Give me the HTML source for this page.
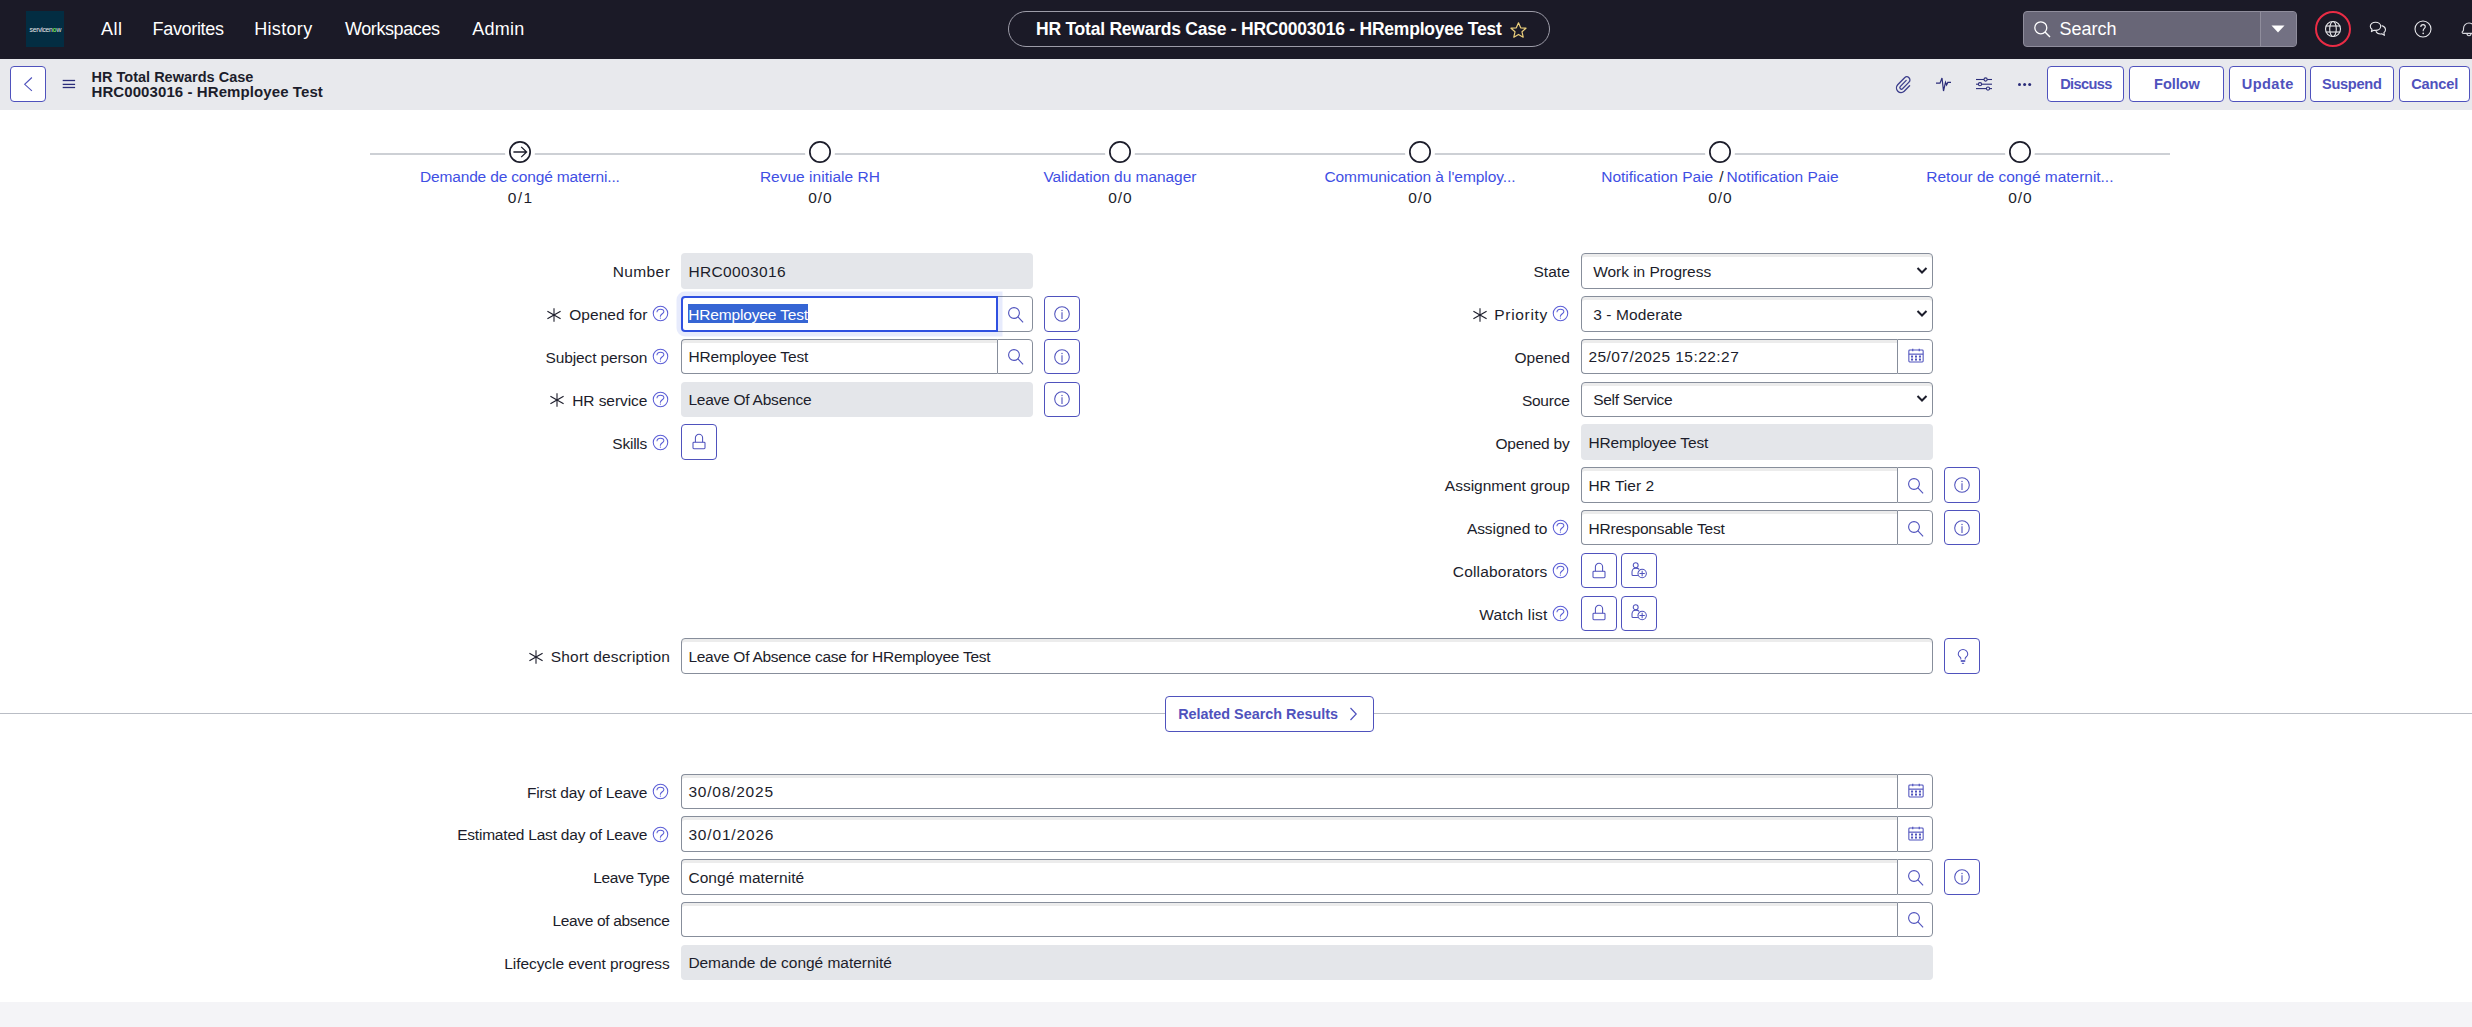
<!DOCTYPE html><html><head><meta charset="utf-8"><title>HR Total Rewards Case</title><style>
*{box-sizing:border-box;margin:0;padding:0}
html,body{width:2472px;height:1027px;overflow:hidden;background:#fff}
body{position:relative;font-family:"Liberation Sans",sans-serif;color:#1c1d2b;font-size:15px}
.a{position:absolute}
.nav{left:0;top:0;width:2472px;height:58.5px;background:#1b1a27}
.navt{color:#fff;font-size:18px;line-height:20px;top:18.7px;white-space:nowrap}
.bar{left:0;top:58.5px;width:2472px;height:51.5px;background:#e8e9ed}
.lbl{font-size:15.5px;line-height:36px;padding-top:1.4px;white-space:nowrap;color:#1c1d2b;text-align:right}
.ast{font-size:20px;margin-right:6px;position:relative;top:2px}
.inp{border:1px solid #878e9b;border-radius:4px;background:#fff;font-size:15.5px;line-height:33.5px;padding-top:0.6px;padding-left:6.2px;white-space:nowrap;box-shadow:inset 0 3px 0 rgba(0,0,0,0.075)}
.inp.ro{border:none;background:#e4e6ea;padding-left:7.2px;line-height:35.5px;box-shadow:none}
.inp.sel{padding-left:11px}
.inp.foc{border:2px solid #2f50e0;padding-left:5px;line-height:31.5px;box-shadow:0 0 0 4.5px rgba(70,100,230,0.13);border-radius:4px}
.selt{background:#3565d4;color:#fff;padding:2px 0 0.3px 0}
.ibtn{border:1px solid #878e9b;border-left:1px solid #878e9b;border-radius:0 4px 4px 0;background:#fff}
.sqb{border:1px solid #4f52bd;border-radius:4px;background:#fff}
.btn{border:1px solid #4f52bd;border-radius:4px;background:#fff;color:#4f52bd;font-weight:700;font-size:14.6px;text-align:center;line-height:33.5px;padding-top:0.9px;white-space:nowrap}
.stl{color:#3f4fe4;font-size:15.5px;line-height:18px;white-space:nowrap;text-align:center;width:300px}
.stc{color:#1c1d2b;font-size:15.5px;line-height:18px;text-align:center;width:300px}

</style></head><body>
<div class="a nav"></div>
<div class="a" style="left:26px;top:11px;width:38px;height:36px;background:#032d42"></div>
<div class="a" style="left:25.3px;top:25.5px;width:40px;font-size:6.8px;line-height:8px;color:#e6e6e6;text-align:center;font-weight:400;letter-spacing:-0.3px">servicen<span style="color:#62d84e;font-weight:700">o</span>w</div>
<div class="a navt" style="left:101px;letter-spacing:0.498px">All</div>
<div class="a navt" style="left:152.5px;letter-spacing:-0.315px">Favorites</div>
<div class="a navt" style="left:254.2px;letter-spacing:0.333px">History</div>
<div class="a navt" style="left:345px;letter-spacing:-0.411px">Workspaces</div>
<div class="a navt" style="left:472.2px;letter-spacing:0.248px">Admin</div>
<div class="a" style="left:1008px;top:11px;width:542px;height:35.5px;border:1px solid #9d9ca8;border-radius:18px"></div>
<div class="a" style="left:1036px;top:18.5px;font-size:17.5px;line-height:20px;font-weight:700;color:#fff;white-space:nowrap;letter-spacing:-0.236px">HR Total Rewards Case - HRC0003016 - HRemployee Test</div>
<svg class="a" style="left:1508.5px;top:20.8px" width="19" height="19" viewBox="0 0 19 19"><path d="M9.5 1.8 L11.7 6.8 L17 7.2 L13 10.8 L14.2 16.2 L9.5 13.4 L4.8 16.2 L6 10.8 L2 7.2 L7.3 6.8 Z" fill="none" stroke="#eccf7c" stroke-width="1.2" stroke-linejoin="round"/></svg>
<div class="a" style="left:2023px;top:11px;width:273.5px;height:35.5px;background:#686677;border:1px solid #8f8d9c;border-radius:4px"></div>
<div class="a" style="left:2259.5px;top:12px;width:36px;height:33.5px;background:#737183;border-left:1px solid #8f8d9c;border-radius:0 4px 4px 0"></div>
<svg class="a" style="left:2033px;top:20px" width="19" height="19" viewBox="0 0 19 19"><circle cx="7.8" cy="7.8" r="6" fill="none" stroke="#fff" stroke-width="1.3"/><line x1="12" y1="12" x2="17" y2="17" stroke="#fff" stroke-width="1.4"/></svg>
<div class="a navt" style="left:2059.5px;top:18.7px;font-size:18px;letter-spacing:-0.004px">Search</div>
<svg class="a" style="left:2271px;top:25px" width="14" height="8" viewBox="0 0 14 8"><path d="M0.5 0.5 L13.5 0.5 L7 7.5 Z" fill="#fff"/></svg>
<div class="a" style="left:2315px;top:10.5px;width:36px;height:36px;border:2px solid #ea2c45;border-radius:50%"></div>
<svg class="a" style="left:2324px;top:20px" width="18" height="18" viewBox="0 0 18 18"><g fill="none" stroke="#e8e8ec" stroke-width="1.1"><circle cx="9" cy="9" r="7.5"/><ellipse cx="9" cy="9" rx="3.3" ry="7.5"/><line x1="1.8" y1="6" x2="16.2" y2="6"/><line x1="1.8" y1="12" x2="16.2" y2="12"/></g></svg>
<svg class="a" style="left:2369px;top:21px" width="18" height="16" viewBox="0 0 18 16"><g fill="none" stroke="#e8e8ec" stroke-width="1.1" stroke-linejoin="round"><path d="M6.5 1.2 C3.6 1.2 1.3 3 1.3 5.3 C1.3 6.6 2 7.6 3 8.3 L2.4 10.6 L5 9.2 C5.5 9.3 6 9.4 6.5 9.4 C9.4 9.4 11.7 7.6 11.7 5.3 C11.7 3 9.4 1.2 6.5 1.2 Z"/><path d="M12.6 4.6 C14.8 5.2 16.5 6.8 16.5 8.8 C16.5 10 15.9 11 14.9 11.7 L15.4 14.4 L12.8 12.8 C12.3 12.9 11.8 13 11.3 13 C9.3 13 7.6 12 6.9 10.3"/></g></svg>
<svg class="a" style="left:2413.5px;top:19.5px" width="18" height="18" viewBox="0 0 18 18"><g fill="none" stroke="#e8e8ec" stroke-width="1.1"><circle cx="9" cy="9" r="8"/><path d="M6.8 6.9 C6.8 5.4 7.8 4.6 9.1 4.6 C10.4 4.6 11.3 5.5 11.3 6.7 C11.3 8.3 9.2 8.6 9.2 10.6 L9.2 11.3"/></g><circle cx="9.2" cy="13.4" r="0.8" fill="#e8e8ec"/></svg>
<svg class="a" style="left:2460px;top:20.8px" width="24" height="17" viewBox="0 0 24 17"><path d="M3.6 12.4 C2.2 12.4 1.6 11 2.8 10.2 C3.3 9.9 3.5 9.4 3.5 8.8 V7.5 A5.5 5.5 0 0 1 14.5 7.5 V8.8 C14.5 9.4 14.7 9.9 15.2 10.2 C16.4 11 15.8 12.4 14.4 12.4 Z M7 12.6 A2 2.1 0 0 0 11 12.6" fill="none" stroke="#d8d8de" stroke-width="1.15"/></svg>
<div class="a bar"></div>
<div class="a" style="left:10px;top:66px;width:36px;height:36px;border:1px solid #4f52bd;border-radius:4px;background:#fff"></div>
<svg class="a" style="left:20px;top:74px" width="16" height="20" viewBox="0 0 16 20"><path d="M11.9 3.5 L4.7 10.3 L11.9 16.9" fill="none" stroke="#4f52bd" stroke-width="1.1"/></svg>
<svg class="a" style="left:61px;top:77px" width="16" height="14" viewBox="0 0 16 14"><g stroke="#2b2d7a" stroke-width="1.3"><line x1="1.7" y1="3.5" x2="14.1" y2="3.5"/><line x1="1.7" y1="7.4" x2="14.1" y2="7.4"/><line x1="1.7" y1="10.5" x2="14.1" y2="10.5"/></g></svg>
<div class="a" style="left:91.5px;top:68.7px;font-size:14.5px;line-height:16px;font-weight:700;white-space:nowrap;color:#1c1d2b;letter-spacing:0.008px">HR Total Rewards Case</div><div class="a" style="left:91.5px;top:83.5px;font-size:15px;line-height:16px;font-weight:700;white-space:nowrap;color:#1c1d2b;letter-spacing:0.086px">HRC0003016 - HRemployee Test</div>
<svg class="a" style="left:1893px;top:74px" width="20" height="20" viewBox="0 0 20 20"><path d="M13.2 6.4 L7.2 12.6 A1.6 1.6 0 0 0 9.5 14.8 L16 8.1 A3.1 3.1 0 0 0 11.6 3.7 L4.7 10.8 A4.6 4.6 0 0 0 11.2 17.3 L16.6 11.7" fill="none" stroke="#3b3d8c" stroke-width="1.3" stroke-linecap="round"/></svg>
<svg class="a" style="left:1934px;top:74px" width="20" height="20" viewBox="0 0 20 20"><path d="M2 9.1 H6 L8 4 L9.5 17 L11.5 8.2 L12.6 11 L13.8 8.4 H17" fill="none" stroke="#2b2d7a" stroke-width="1.2" stroke-linejoin="miter"/></svg>
<svg class="a" style="left:1974px;top:74px" width="20" height="20" viewBox="0 0 20 20"><g fill="none" stroke="#2b2d7a" stroke-width="1.1"><line x1="2" y1="5.5" x2="18" y2="5.5"/><line x1="2" y1="10.2" x2="18" y2="10.2"/><line x1="2" y1="14.6" x2="18" y2="14.6"/></g><g fill="#e8e9ed" stroke="#2b2d7a" stroke-width="1.1"><circle cx="11.6" cy="5.5" r="1.6"/><circle cx="6" cy="10.2" r="1.6"/><circle cx="14" cy="14.6" r="1.6"/></g></svg>
<svg class="a" style="left:2014px;top:74px" width="20" height="20" viewBox="0 0 20 20"><g fill="#2b2d7a"><circle cx="5.5" cy="10.4" r="1.5"/><circle cx="10.6" cy="10.4" r="1.5"/><circle cx="15.7" cy="10.4" r="1.5"/></g></svg>
<div class="a btn" style="left:2047.4px;top:66.2px;width:77.0px;height:35.5px;letter-spacing:-0.643px;padding-left:-0.643px">Discuss</div>
<div class="a btn" style="left:2129.4px;top:66.2px;width:95.0px;height:35.5px;letter-spacing:-0.111px;padding-left:-0.111px">Follow</div>
<div class="a btn" style="left:2229.4px;top:66.2px;width:76.3px;height:35.5px;letter-spacing:0.391px;padding-left:0.391px">Update</div>
<div class="a btn" style="left:2310px;top:66.2px;width:83.5px;height:35.5px;letter-spacing:-0.302px;padding-left:-0.302px">Suspend</div>
<div class="a btn" style="left:2399.2px;top:66.2px;width:71.1px;height:35.5px;letter-spacing:-0.141px;padding-left:-0.141px">Cancel</div>
<div class="a" style="left:370px;top:152.5px;width:1800px;height:2px;background:#cdd0d5"></div>
<div class="a" style="left:504.9px;top:137px;width:30px;height:30px;background:#fff;border-radius:50%"></div>
<svg class="a" style="left:507.9px;top:140.2px" width="24" height="24" viewBox="0 0 24 24"><circle cx="12" cy="12" r="10.15" fill="#fff" stroke="#1c1d2b" stroke-width="1.7"/></svg>
<svg class="a" style="left:512.9px;top:145.2px" width="16" height="14" viewBox="0 0 16 14"><path d="M0.4 7 H13.6 M8.2 1.9 L13.6 7 L8.2 12.1" fill="none" stroke="#1c1d2b" stroke-width="1.3"/></svg>
<div class="a stl" style="left:369.9px;top:168.4px;letter-spacing:-0.165px;padding-left:-0.165px">Demande de congé materni...</div>
<div class="a stc" style="left:369.9px;top:188.8px;letter-spacing:1.437px;padding-left:1.437px">0/1</div>
<div class="a" style="left:804.9px;top:137px;width:30px;height:30px;background:#fff;border-radius:50%"></div>
<svg class="a" style="left:807.9px;top:140.2px" width="24" height="24" viewBox="0 0 24 24"><circle cx="12" cy="12" r="10.15" fill="#fff" stroke="#1c1d2b" stroke-width="1.7"/></svg>
<div class="a stl" style="left:669.9px;top:168.4px;letter-spacing:0.015px;padding-left:0.015px">Revue initiale RH</div>
<div class="a stc" style="left:669.9px;top:188.8px;letter-spacing:0.937px;padding-left:0.937px">0/0</div>
<div class="a" style="left:1104.9px;top:137px;width:30px;height:30px;background:#fff;border-radius:50%"></div>
<svg class="a" style="left:1107.9px;top:140.2px" width="24" height="24" viewBox="0 0 24 24"><circle cx="12" cy="12" r="10.15" fill="#fff" stroke="#1c1d2b" stroke-width="1.7"/></svg>
<div class="a stl" style="left:969.9000000000001px;top:168.4px;letter-spacing:-0.045px;padding-left:-0.045px">Validation du manager</div>
<div class="a stc" style="left:969.9000000000001px;top:188.8px;letter-spacing:0.937px;padding-left:0.937px">0/0</div>
<div class="a" style="left:1404.9px;top:137px;width:30px;height:30px;background:#fff;border-radius:50%"></div>
<svg class="a" style="left:1407.9px;top:140.2px" width="24" height="24" viewBox="0 0 24 24"><circle cx="12" cy="12" r="10.15" fill="#fff" stroke="#1c1d2b" stroke-width="1.7"/></svg>
<div class="a stl" style="left:1269.9px;top:168.4px;letter-spacing:-0.075px;padding-left:-0.075px">Communication à l'employ...</div>
<div class="a stc" style="left:1269.9px;top:188.8px;letter-spacing:0.937px;padding-left:0.937px">0/0</div>
<div class="a" style="left:1704.9px;top:137px;width:30px;height:30px;background:#fff;border-radius:50%"></div>
<svg class="a" style="left:1707.9px;top:140.2px" width="24" height="24" viewBox="0 0 24 24"><circle cx="12" cy="12" r="10.15" fill="#fff" stroke="#1c1d2b" stroke-width="1.7"/></svg>
<div class="a stl" style="left:1569.9px;top:168.4px;letter-spacing:0px;padding-left:0px">Notification Paie<span style="color:#1c1d2b;margin:0 3px 0 6px">/</span>Notification Paie</div>
<div class="a stc" style="left:1569.9px;top:188.8px;letter-spacing:0.937px;padding-left:0.937px">0/0</div>
<div class="a" style="left:2004.9px;top:137px;width:30px;height:30px;background:#fff;border-radius:50%"></div>
<svg class="a" style="left:2007.9px;top:140.2px" width="24" height="24" viewBox="0 0 24 24"><circle cx="12" cy="12" r="10.15" fill="#fff" stroke="#1c1d2b" stroke-width="1.7"/></svg>
<div class="a stl" style="left:1869.9px;top:168.4px;letter-spacing:-0.028px;padding-left:-0.028px">Retour de congé maternit...</div>
<div class="a stc" style="left:1869.9px;top:188.8px;letter-spacing:0.937px;padding-left:0.937px">0/0</div>
<div class="a lbl" style="right:1801.79px;top:253.05px;letter-spacing:0.407px">Number</div>
<div class="a inp ro" style="left:681.2px;top:253.30px;width:351.50px;height:35.5px;letter-spacing:0.377px">HRC0003016</div>
<svg class="a" style="left:652.3px;top:305.33000000000004px" width="17" height="17" viewBox="0 0 17 17"><circle cx="8.5" cy="8.5" r="7.25" fill="none" stroke="#5b5ed6" stroke-width="1.05"/><path d="M4.95 7.3 C4.95 5.3 6.5 4.2 8.5 4.2 C10.4 4.2 11.85 5.2 11.85 6.7 C11.85 8.4 8.4 9.2 8.4 11.2 L8.4 11.7" fill="none" stroke="#5b5ed6" stroke-width="1.05"/><circle cx="8.4" cy="13.1" r="0.65" fill="#5b5ed6"/></svg><div class="a lbl" style="right:1824.63px;top:295.83px;letter-spacing:0.068px"><svg width="16" height="16" viewBox="0 0 16 16" style="vertical-align:-2.5px;margin-right:6.73px"><g stroke="#1c1d2b" stroke-width="1.1"><line x1="8" y1="1.2" x2="8" y2="14.8"/><line x1="1.4" y1="4.2" x2="14.6" y2="11.8"/><line x1="1.4" y1="11.8" x2="14.6" y2="4.2"/></g></svg>Opened for</div>
<div class="a inp foc" style="left:681.2px;top:296.08px;width:316.80px;height:35.5px;letter-spacing:-0.151px;border-radius:4px 0 0 4px;z-index:2"><span class="selt">HRemployee Test</span></div><div class="a ibtn" style="left:997.20px;top:296.08px;width:35.5px;height:35.5px"></div><svg class="a" style="left:1004.70px;top:303.68px" width="20" height="20" viewBox="0 0 20 20"><circle cx="9" cy="9" r="5.4" fill="none" stroke="#4f52bd" stroke-width="1.1"/><line x1="12.7" y1="12.7" x2="18.1" y2="18.3" stroke="#4f52bd" stroke-width="1.15"/></svg>
<div class="a sqb" style="left:1044.2px;top:296.08000000000004px;width:35.5px;height:35.5px"></div><svg class="a" style="left:1053.45px;top:304.93000000000006px" width="18" height="18" viewBox="0 0 18 18"><circle cx="9" cy="9" r="7.3" fill="none" stroke="#4f52bd" stroke-width="1.05"/><line x1="9" y1="7.3" x2="9" y2="13.9" stroke="#4f52bd" stroke-width="1.1"/><circle cx="9" cy="5.5" r="0.7" fill="#4f52bd"/></svg>
<svg class="a" style="left:652.3px;top:348.11px" width="17" height="17" viewBox="0 0 17 17"><circle cx="8.5" cy="8.5" r="7.25" fill="none" stroke="#5b5ed6" stroke-width="1.05"/><path d="M4.95 7.3 C4.95 5.3 6.5 4.2 8.5 4.2 C10.4 4.2 11.85 5.2 11.85 6.7 C11.85 8.4 8.4 9.2 8.4 11.2 L8.4 11.7" fill="none" stroke="#5b5ed6" stroke-width="1.05"/><circle cx="8.4" cy="13.1" r="0.65" fill="#5b5ed6"/></svg><div class="a lbl" style="right:1824.83px;top:338.61px;letter-spacing:-0.129px">Subject person</div>
<div class="a inp" style="left:681.2px;top:338.86px;width:316.00px;height:35.5px;letter-spacing:-0.151px;border-radius:4px 0 0 4px;border-right:none">HRemployee Test</div><div class="a ibtn" style="left:997.20px;top:338.86px;width:35.5px;height:35.5px"></div><svg class="a" style="left:1004.70px;top:346.46px" width="20" height="20" viewBox="0 0 20 20"><circle cx="9" cy="9" r="5.4" fill="none" stroke="#4f52bd" stroke-width="1.1"/><line x1="12.7" y1="12.7" x2="18.1" y2="18.3" stroke="#4f52bd" stroke-width="1.15"/></svg>
<div class="a sqb" style="left:1044.2px;top:338.86px;width:35.5px;height:35.5px"></div><svg class="a" style="left:1053.45px;top:347.71000000000004px" width="18" height="18" viewBox="0 0 18 18"><circle cx="9" cy="9" r="7.3" fill="none" stroke="#4f52bd" stroke-width="1.05"/><line x1="9" y1="7.3" x2="9" y2="13.9" stroke="#4f52bd" stroke-width="1.1"/><circle cx="9" cy="5.5" r="0.7" fill="#4f52bd"/></svg>
<svg class="a" style="left:652.3px;top:390.89px" width="17" height="17" viewBox="0 0 17 17"><circle cx="8.5" cy="8.5" r="7.25" fill="none" stroke="#5b5ed6" stroke-width="1.05"/><path d="M4.95 7.3 C4.95 5.3 6.5 4.2 8.5 4.2 C10.4 4.2 11.85 5.2 11.85 6.7 C11.85 8.4 8.4 9.2 8.4 11.2 L8.4 11.7" fill="none" stroke="#5b5ed6" stroke-width="1.05"/><circle cx="8.4" cy="13.1" r="0.65" fill="#5b5ed6"/></svg><div class="a lbl" style="right:1824.79px;top:381.39px;letter-spacing:-0.085px"><svg width="16" height="16" viewBox="0 0 16 16" style="vertical-align:-2.5px;margin-right:6.88px"><g stroke="#1c1d2b" stroke-width="1.1"><line x1="8" y1="1.2" x2="8" y2="14.8"/><line x1="1.4" y1="4.2" x2="14.6" y2="11.8"/><line x1="1.4" y1="11.8" x2="14.6" y2="4.2"/></g></svg>HR service</div>
<div class="a inp ro" style="left:681.2px;top:381.64px;width:351.50px;height:35.5px;letter-spacing:-0.234px">Leave Of Absence</div>
<div class="a sqb" style="left:1044.2px;top:381.64px;width:35.5px;height:35.5px"></div><svg class="a" style="left:1053.45px;top:390.49px" width="18" height="18" viewBox="0 0 18 18"><circle cx="9" cy="9" r="7.3" fill="none" stroke="#4f52bd" stroke-width="1.05"/><line x1="9" y1="7.3" x2="9" y2="13.9" stroke="#4f52bd" stroke-width="1.1"/><circle cx="9" cy="5.5" r="0.7" fill="#4f52bd"/></svg>
<svg class="a" style="left:652.3px;top:433.67px" width="17" height="17" viewBox="0 0 17 17"><circle cx="8.5" cy="8.5" r="7.25" fill="none" stroke="#5b5ed6" stroke-width="1.05"/><path d="M4.95 7.3 C4.95 5.3 6.5 4.2 8.5 4.2 C10.4 4.2 11.85 5.2 11.85 6.7 C11.85 8.4 8.4 9.2 8.4 11.2 L8.4 11.7" fill="none" stroke="#5b5ed6" stroke-width="1.05"/><circle cx="8.4" cy="13.1" r="0.65" fill="#5b5ed6"/></svg><div class="a lbl" style="right:1824.92px;top:424.17px;letter-spacing:-0.224px">Skills</div>
<div class="a sqb" style="left:681.2px;top:424.42px;width:35.5px;height:35.5px"></div><svg class="a" style="left:690.95px;top:433.17px" width="16" height="18" viewBox="0 0 16 18"><path d="M4.4 9.2 V4.8 A3.6 3.6 0 0 1 11.6 4.8 V9.2" fill="none" stroke="#4f52bd" stroke-width="1.05"/><rect x="2" y="9.2" width="12" height="6.5" rx="0.9" fill="none" stroke="#4f52bd" stroke-width="1.05"/></svg>
<div class="a lbl" style="right:902.14px;top:253.05px;letter-spacing:0.057px">State</div>
<div class="a inp sel" style="left:1581.2px;top:253.30px;width:351.50px;height:35.5px;letter-spacing:-0.042px">Work in Progress</div><svg class="a" style="left:1915.7px;top:266.05px" width="12" height="9" viewBox="0 0 12 9"><path d="M1.5 2 L6 6.5 L10.5 2" fill="none" stroke="#1c1d2b" stroke-width="2"/></svg>
<svg class="a" style="left:1552.3px;top:305.33000000000004px" width="17" height="17" viewBox="0 0 17 17"><circle cx="8.5" cy="8.5" r="7.25" fill="none" stroke="#5b5ed6" stroke-width="1.05"/><path d="M4.95 7.3 C4.95 5.3 6.5 4.2 8.5 4.2 C10.4 4.2 11.85 5.2 11.85 6.7 C11.85 8.4 8.4 9.2 8.4 11.2 L8.4 11.7" fill="none" stroke="#5b5ed6" stroke-width="1.05"/><circle cx="8.4" cy="13.1" r="0.65" fill="#5b5ed6"/></svg><div class="a lbl" style="right:924.01px;top:295.83px;letter-spacing:0.689px"><svg width="16" height="16" viewBox="0 0 16 16" style="vertical-align:-2.5px;margin-right:6.11px"><g stroke="#1c1d2b" stroke-width="1.1"><line x1="8" y1="1.2" x2="8" y2="14.8"/><line x1="1.4" y1="4.2" x2="14.6" y2="11.8"/><line x1="1.4" y1="11.8" x2="14.6" y2="4.2"/></g></svg>Priority</div>
<div class="a inp sel" style="left:1581.2px;top:296.08px;width:351.50px;height:35.5px;letter-spacing:0.122px">3 - Moderate</div><svg class="a" style="left:1915.7px;top:308.83000000000004px" width="12" height="9" viewBox="0 0 12 9"><path d="M1.5 2 L6 6.5 L10.5 2" fill="none" stroke="#1c1d2b" stroke-width="2"/></svg>
<div class="a lbl" style="right:902.17px;top:338.61px;letter-spacing:0.032px">Opened</div>
<div class="a inp" style="left:1581.2px;top:338.86px;width:316.00px;height:35.5px;letter-spacing:0.456px;border-radius:4px 0 0 4px;border-right:none">25/07/2025 15:22:27</div><div class="a ibtn" style="left:1897.20px;top:338.86px;width:35.5px;height:35.5px"></div><svg class="a" style="left:1906.6000000000001px;top:347.36px" width="18" height="18" viewBox="0 0 18 18"><rect x="1.85" y="3.05" width="14.3" height="11.9" rx="0.9" fill="none" stroke="#4f52bd" stroke-width="1.05"/><line x1="1.85" y1="7.15" x2="16.15" y2="7.15" stroke="#4f52bd" stroke-width="1.15"/><line x1="5.75" y1="1.65" x2="5.75" y2="4.25" stroke="#4f52bd" stroke-width="1.15"/><line x1="12.25" y1="1.65" x2="12.25" y2="4.25" stroke="#4f52bd" stroke-width="1.15"/><rect x="4.05" y="8.55" width="2" height="2" fill="#4f52bd"/><rect x="4.05" y="11.55" width="2" height="2" fill="#4f52bd"/><rect x="8.00" y="8.55" width="2" height="2" fill="#4f52bd"/><rect x="8.00" y="11.55" width="2" height="2" fill="#4f52bd"/><rect x="11.95" y="8.55" width="2" height="2" fill="#4f52bd"/><rect x="11.95" y="11.55" width="2" height="2" fill="#4f52bd"/></svg>
<div class="a lbl" style="right:902.44px;top:381.39px;letter-spacing:-0.238px">Source</div>
<div class="a inp sel" style="left:1581.2px;top:381.64px;width:351.50px;height:35.5px;letter-spacing:-0.298px">Self Service</div><svg class="a" style="left:1915.7px;top:394.39px" width="12" height="9" viewBox="0 0 12 9"><path d="M1.5 2 L6 6.5 L10.5 2" fill="none" stroke="#1c1d2b" stroke-width="2"/></svg>
<div class="a lbl" style="right:902.39px;top:424.17px;letter-spacing:-0.186px">Opened by</div>
<div class="a inp ro" style="left:1581.2px;top:424.42px;width:351.50px;height:35.5px;letter-spacing:-0.151px">HRemployee Test</div>
<div class="a lbl" style="right:902.19px;top:466.95px;letter-spacing:0.006px">Assignment group</div>
<div class="a inp" style="left:1581.2px;top:467.20px;width:316.00px;height:35.5px;letter-spacing:0.035px;border-radius:4px 0 0 4px;border-right:none">HR Tier 2</div><div class="a ibtn" style="left:1897.20px;top:467.20px;width:35.5px;height:35.5px"></div><svg class="a" style="left:1904.70px;top:474.80px" width="20" height="20" viewBox="0 0 20 20"><circle cx="9" cy="9" r="5.4" fill="none" stroke="#4f52bd" stroke-width="1.1"/><line x1="12.7" y1="12.7" x2="18.1" y2="18.3" stroke="#4f52bd" stroke-width="1.15"/></svg>
<div class="a sqb" style="left:1944.1px;top:467.20000000000005px;width:35.5px;height:35.5px"></div><svg class="a" style="left:1953.35px;top:476.05000000000007px" width="18" height="18" viewBox="0 0 18 18"><circle cx="9" cy="9" r="7.3" fill="none" stroke="#4f52bd" stroke-width="1.05"/><line x1="9" y1="7.3" x2="9" y2="13.9" stroke="#4f52bd" stroke-width="1.1"/><circle cx="9" cy="5.5" r="0.7" fill="#4f52bd"/></svg>
<svg class="a" style="left:1552.3px;top:519.23px" width="17" height="17" viewBox="0 0 17 17"><circle cx="8.5" cy="8.5" r="7.25" fill="none" stroke="#5b5ed6" stroke-width="1.05"/><path d="M4.95 7.3 C4.95 5.3 6.5 4.2 8.5 4.2 C10.4 4.2 11.85 5.2 11.85 6.7 C11.85 8.4 8.4 9.2 8.4 11.2 L8.4 11.7" fill="none" stroke="#5b5ed6" stroke-width="1.05"/><circle cx="8.4" cy="13.1" r="0.65" fill="#5b5ed6"/></svg><div class="a lbl" style="right:924.76px;top:509.73px;letter-spacing:-0.058px">Assigned to</div>
<div class="a inp" style="left:1581.2px;top:509.98px;width:316.00px;height:35.5px;letter-spacing:-0.168px;border-radius:4px 0 0 4px;border-right:none">HRresponsable Test</div><div class="a ibtn" style="left:1897.20px;top:509.98px;width:35.5px;height:35.5px"></div><svg class="a" style="left:1904.70px;top:517.58px" width="20" height="20" viewBox="0 0 20 20"><circle cx="9" cy="9" r="5.4" fill="none" stroke="#4f52bd" stroke-width="1.1"/><line x1="12.7" y1="12.7" x2="18.1" y2="18.3" stroke="#4f52bd" stroke-width="1.15"/></svg>
<div class="a sqb" style="left:1944.1px;top:509.98px;width:35.5px;height:35.5px"></div><svg class="a" style="left:1953.35px;top:518.83px" width="18" height="18" viewBox="0 0 18 18"><circle cx="9" cy="9" r="7.3" fill="none" stroke="#4f52bd" stroke-width="1.05"/><line x1="9" y1="7.3" x2="9" y2="13.9" stroke="#4f52bd" stroke-width="1.1"/><circle cx="9" cy="5.5" r="0.7" fill="#4f52bd"/></svg>
<svg class="a" style="left:1552.3px;top:562.01px" width="17" height="17" viewBox="0 0 17 17"><circle cx="8.5" cy="8.5" r="7.25" fill="none" stroke="#5b5ed6" stroke-width="1.05"/><path d="M4.95 7.3 C4.95 5.3 6.5 4.2 8.5 4.2 C10.4 4.2 11.85 5.2 11.85 6.7 C11.85 8.4 8.4 9.2 8.4 11.2 L8.4 11.7" fill="none" stroke="#5b5ed6" stroke-width="1.05"/><circle cx="8.4" cy="13.1" r="0.65" fill="#5b5ed6"/></svg><div class="a lbl" style="right:924.50px;top:552.51px;letter-spacing:0.197px">Collaborators</div>
<div class="a sqb" style="left:1581.2px;top:552.76px;width:35.5px;height:35.5px"></div><svg class="a" style="left:1590.95px;top:561.51px" width="16" height="18" viewBox="0 0 16 18"><path d="M4.4 9.2 V4.8 A3.6 3.6 0 0 1 11.6 4.8 V9.2" fill="none" stroke="#4f52bd" stroke-width="1.05"/><rect x="2" y="9.2" width="12" height="6.5" rx="0.9" fill="none" stroke="#4f52bd" stroke-width="1.05"/></svg>
<div class="a sqb" style="left:1621.4px;top:552.76px;width:35.5px;height:35.5px"></div><svg class="a" style="left:1630.15px;top:561.51px" width="18" height="18" viewBox="0 0 18 18"><g fill="none" stroke="#4f52bd" stroke-width="1.05"><circle cx="5.7" cy="3.2" r="2.45"/><path d="M9.2 7.4 C8.4 6.4 7.2 6.1 5.7 6.1 C3.3 6.1 2 7.8 2 10 V12.4 Q2 13.4 3 13.4 H7.9"/><circle cx="12.15" cy="11.5" r="4.2"/><line x1="12.15" y1="8.85" x2="12.15" y2="14.15"/><line x1="9.5" y1="11.5" x2="14.8" y2="11.5"/></g></svg>
<svg class="a" style="left:1552.3px;top:604.79px" width="17" height="17" viewBox="0 0 17 17"><circle cx="8.5" cy="8.5" r="7.25" fill="none" stroke="#5b5ed6" stroke-width="1.05"/><path d="M4.95 7.3 C4.95 5.3 6.5 4.2 8.5 4.2 C10.4 4.2 11.85 5.2 11.85 6.7 C11.85 8.4 8.4 9.2 8.4 11.2 L8.4 11.7" fill="none" stroke="#5b5ed6" stroke-width="1.05"/><circle cx="8.4" cy="13.1" r="0.65" fill="#5b5ed6"/></svg><div class="a lbl" style="right:924.53px;top:595.29px;letter-spacing:0.167px">Watch list</div>
<div class="a sqb" style="left:1581.2px;top:595.54px;width:35.5px;height:35.5px"></div><svg class="a" style="left:1590.95px;top:604.29px" width="16" height="18" viewBox="0 0 16 18"><path d="M4.4 9.2 V4.8 A3.6 3.6 0 0 1 11.6 4.8 V9.2" fill="none" stroke="#4f52bd" stroke-width="1.05"/><rect x="2" y="9.2" width="12" height="6.5" rx="0.9" fill="none" stroke="#4f52bd" stroke-width="1.05"/></svg>
<div class="a sqb" style="left:1621.4px;top:595.54px;width:35.5px;height:35.5px"></div><svg class="a" style="left:1630.15px;top:604.29px" width="18" height="18" viewBox="0 0 18 18"><g fill="none" stroke="#4f52bd" stroke-width="1.05"><circle cx="5.7" cy="3.2" r="2.45"/><path d="M9.2 7.4 C8.4 6.4 7.2 6.1 5.7 6.1 C3.3 6.1 2 7.8 2 10 V12.4 Q2 13.4 3 13.4 H7.9"/><circle cx="12.15" cy="11.5" r="4.2"/><line x1="12.15" y1="8.85" x2="12.15" y2="14.15"/><line x1="9.5" y1="11.5" x2="14.8" y2="11.5"/></g></svg>
<div class="a lbl" style="right:1802.03px;top:638.07px;letter-spacing:0.169px"><svg width="16" height="16" viewBox="0 0 16 16" style="vertical-align:-2.5px;margin-right:6.63px"><g stroke="#1c1d2b" stroke-width="1.1"><line x1="8" y1="1.2" x2="8" y2="14.8"/><line x1="1.4" y1="4.2" x2="14.6" y2="11.8"/><line x1="1.4" y1="11.8" x2="14.6" y2="4.2"/></g></svg>Short description</div>
<div class="a inp" style="left:681.2px;top:638.32px;width:1251.50px;height:35.5px;letter-spacing:-0.257px">Leave Of Absence case for HRemployee Test</div>
<div class="a sqb" style="left:1944.1px;top:638.3199999999999px;width:35.5px;height:35.5px"></div><svg class="a" style="left:1953.55px;top:647.0699999999999px" width="18" height="18" viewBox="0 0 18 18"><path d="M6.8 12.6 V11.2 C6.8 10.2 4.25 9.4 4.25 7.2 A4.75 4.75 0 0 1 13.75 7.2 C13.75 9.4 11.2 10.2 11.2 11.2 V12.6" fill="none" stroke="#4f52bd" stroke-width="1.05"/><rect x="6.75" y="13.15" width="4.5" height="1.7" fill="#4f52bd"/><line x1="7.85" y1="16.35" x2="10.15" y2="16.35" stroke="#4f52bd" stroke-width="1"/></svg>
<div class="a" style="left:0;top:713px;width:2472px;height:1px;background:#b9bdc5"></div>
<div class="a btn" style="left:1165.2px;top:696.2px;width:208.6px;height:35.5px;text-align:left;padding-left:12px;font-size:14.4px;letter-spacing:-0.008px">Related Search Results</div>
<svg class="a" style="left:1347px;top:707px" width="12" height="14" viewBox="0 0 12 14"><path d="M3.5 1 L9.2 7 L3.5 13" fill="none" stroke="#4f52bd" stroke-width="1.2"/></svg>
<svg class="a" style="left:652.3px;top:782.75px" width="17" height="17" viewBox="0 0 17 17"><circle cx="8.5" cy="8.5" r="7.25" fill="none" stroke="#5b5ed6" stroke-width="1.05"/><path d="M4.95 7.3 C4.95 5.3 6.5 4.2 8.5 4.2 C10.4 4.2 11.85 5.2 11.85 6.7 C11.85 8.4 8.4 9.2 8.4 11.2 L8.4 11.7" fill="none" stroke="#5b5ed6" stroke-width="1.05"/><circle cx="8.4" cy="13.1" r="0.65" fill="#5b5ed6"/></svg><div class="a lbl" style="right:1824.86px;top:773.25px;letter-spacing:-0.163px">First day of Leave</div>
<div class="a inp" style="left:681.2px;top:773.50px;width:1216.00px;height:35.5px;letter-spacing:0.783px;border-radius:4px 0 0 4px;border-right:none">30/08/2025</div><div class="a ibtn" style="left:1897.20px;top:773.50px;width:35.5px;height:35.5px"></div><svg class="a" style="left:1906.6000000000001px;top:782.0px" width="18" height="18" viewBox="0 0 18 18"><rect x="1.85" y="3.05" width="14.3" height="11.9" rx="0.9" fill="none" stroke="#4f52bd" stroke-width="1.05"/><line x1="1.85" y1="7.15" x2="16.15" y2="7.15" stroke="#4f52bd" stroke-width="1.15"/><line x1="5.75" y1="1.65" x2="5.75" y2="4.25" stroke="#4f52bd" stroke-width="1.15"/><line x1="12.25" y1="1.65" x2="12.25" y2="4.25" stroke="#4f52bd" stroke-width="1.15"/><rect x="4.05" y="8.55" width="2" height="2" fill="#4f52bd"/><rect x="4.05" y="11.55" width="2" height="2" fill="#4f52bd"/><rect x="8.00" y="8.55" width="2" height="2" fill="#4f52bd"/><rect x="8.00" y="11.55" width="2" height="2" fill="#4f52bd"/><rect x="11.95" y="8.55" width="2" height="2" fill="#4f52bd"/><rect x="11.95" y="11.55" width="2" height="2" fill="#4f52bd"/></svg>
<svg class="a" style="left:652.3px;top:825.53px" width="17" height="17" viewBox="0 0 17 17"><circle cx="8.5" cy="8.5" r="7.25" fill="none" stroke="#5b5ed6" stroke-width="1.05"/><path d="M4.95 7.3 C4.95 5.3 6.5 4.2 8.5 4.2 C10.4 4.2 11.85 5.2 11.85 6.7 C11.85 8.4 8.4 9.2 8.4 11.2 L8.4 11.7" fill="none" stroke="#5b5ed6" stroke-width="1.05"/><circle cx="8.4" cy="13.1" r="0.65" fill="#5b5ed6"/></svg><div class="a lbl" style="right:1824.91px;top:816.03px;letter-spacing:-0.21px">Estimated Last day of Leave</div>
<div class="a inp" style="left:681.2px;top:816.28px;width:1216.00px;height:35.5px;letter-spacing:0.838px;border-radius:4px 0 0 4px;border-right:none">30/01/2026</div><div class="a ibtn" style="left:1897.20px;top:816.28px;width:35.5px;height:35.5px"></div><svg class="a" style="left:1906.6000000000001px;top:824.78px" width="18" height="18" viewBox="0 0 18 18"><rect x="1.85" y="3.05" width="14.3" height="11.9" rx="0.9" fill="none" stroke="#4f52bd" stroke-width="1.05"/><line x1="1.85" y1="7.15" x2="16.15" y2="7.15" stroke="#4f52bd" stroke-width="1.15"/><line x1="5.75" y1="1.65" x2="5.75" y2="4.25" stroke="#4f52bd" stroke-width="1.15"/><line x1="12.25" y1="1.65" x2="12.25" y2="4.25" stroke="#4f52bd" stroke-width="1.15"/><rect x="4.05" y="8.55" width="2" height="2" fill="#4f52bd"/><rect x="4.05" y="11.55" width="2" height="2" fill="#4f52bd"/><rect x="8.00" y="8.55" width="2" height="2" fill="#4f52bd"/><rect x="8.00" y="11.55" width="2" height="2" fill="#4f52bd"/><rect x="11.95" y="8.55" width="2" height="2" fill="#4f52bd"/><rect x="11.95" y="11.55" width="2" height="2" fill="#4f52bd"/></svg>
<div class="a lbl" style="right:1802.58px;top:858.81px;letter-spacing:-0.38px">Leave Type</div>
<div class="a inp" style="left:681.2px;top:859.06px;width:1216.00px;height:35.5px;letter-spacing:0.088px;border-radius:4px 0 0 4px;border-right:none">Congé maternité</div><div class="a ibtn" style="left:1897.20px;top:859.06px;width:35.5px;height:35.5px"></div><svg class="a" style="left:1904.70px;top:866.66px" width="20" height="20" viewBox="0 0 20 20"><circle cx="9" cy="9" r="5.4" fill="none" stroke="#4f52bd" stroke-width="1.1"/><line x1="12.7" y1="12.7" x2="18.1" y2="18.3" stroke="#4f52bd" stroke-width="1.15"/></svg>
<div class="a sqb" style="left:1944.1px;top:859.06px;width:35.5px;height:35.5px"></div><svg class="a" style="left:1953.35px;top:867.91px" width="18" height="18" viewBox="0 0 18 18"><circle cx="9" cy="9" r="7.3" fill="none" stroke="#4f52bd" stroke-width="1.05"/><line x1="9" y1="7.3" x2="9" y2="13.9" stroke="#4f52bd" stroke-width="1.1"/><circle cx="9" cy="5.5" r="0.7" fill="#4f52bd"/></svg>
<div class="a lbl" style="right:1802.54px;top:901.59px;letter-spacing:-0.337px">Leave of absence</div>
<div class="a inp" style="left:681.2px;top:901.84px;width:1216.00px;height:35.5px;letter-spacing:0px;border-radius:4px 0 0 4px;border-right:none"></div><div class="a ibtn" style="left:1897.20px;top:901.84px;width:35.5px;height:35.5px"></div><svg class="a" style="left:1904.70px;top:909.44px" width="20" height="20" viewBox="0 0 20 20"><circle cx="9" cy="9" r="5.4" fill="none" stroke="#4f52bd" stroke-width="1.1"/><line x1="12.7" y1="12.7" x2="18.1" y2="18.3" stroke="#4f52bd" stroke-width="1.15"/></svg>
<div class="a lbl" style="right:1802.27px;top:944.37px;letter-spacing:-0.069px">Lifecycle event progress</div>
<div class="a inp ro" style="left:681.2px;top:944.62px;width:1251.50px;height:35.5px;letter-spacing:-0.032px">Demande de congé maternité</div>
<div class="a" style="left:0;top:1002px;width:2472px;height:25px;background:#f4f4f7"></div>
</body></html>
